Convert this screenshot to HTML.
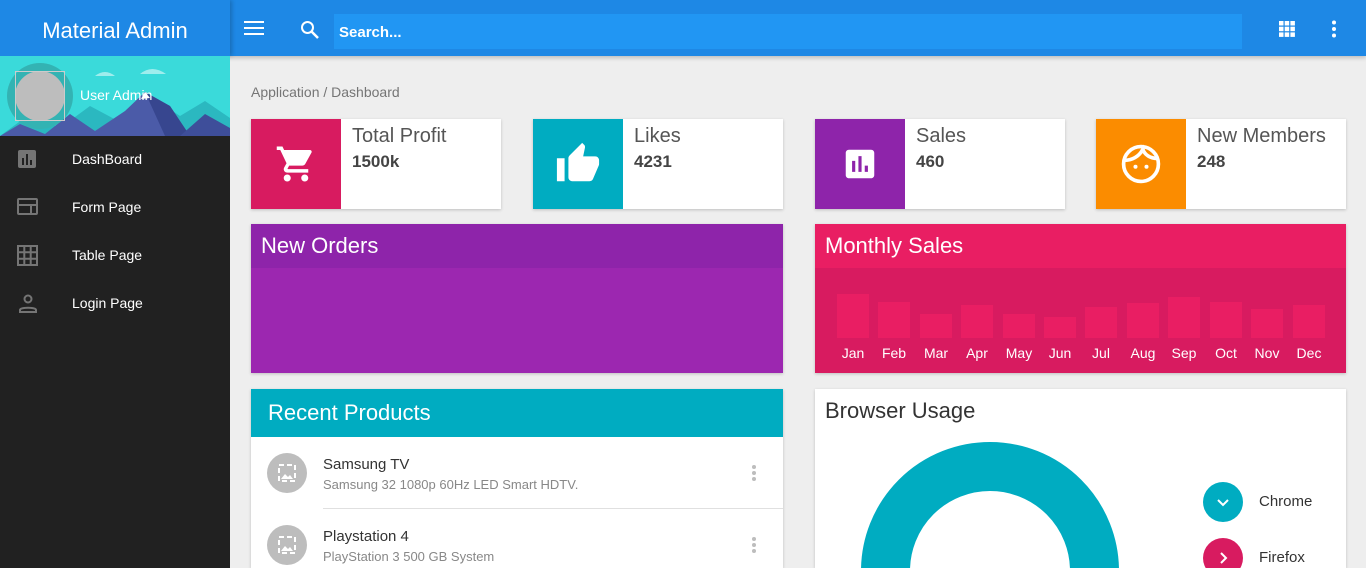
<!DOCTYPE html>
<html><head><meta charset="utf-8"><style>
*{box-sizing:border-box;margin:0;padding:0}
html,body{width:1366px;height:568px;overflow:hidden}
body{background:#EEEEEE;font-family:"Liberation Sans",sans-serif;position:relative}
.abs{position:absolute}
.card{position:absolute;background:#fff;box-shadow:0 1px 3px rgba(0,0,0,.2)}
.ic{position:absolute;left:0;top:0;width:90px;height:90px;display:flex;align-items:center;justify-content:center}
.ttl{position:absolute;left:101px;top:6px;font-size:20px;color:#555;font-weight:300}
.val{position:absolute;left:101px;top:33px;font-size:17px;color:#444;font-weight:bold}
.menu{position:absolute;left:0;width:230px;height:48px;color:#fff;font-size:14px}
.menu span{position:absolute;left:72px;top:15px}
.menu svg{position:absolute;left:17px;top:13px}
.bar{position:absolute;background:#E91E63;width:32px;bottom:0}
.mon{position:absolute;top:121px;color:#fff;font-size:14px;width:40px;text-align:center}
</style></head><body>
<div class="abs" style="left:0;top:0;width:1366px;height:56px;background:#1E88E5;box-shadow:0 2px 4px rgba(0,0,0,.2)"></div>
<div class="abs" style="left:0;top:0;width:230px;height:56px;background:#1E88E5;color:#fff;font-size:22px;text-align:center;line-height:62px;box-shadow:2px 0 4px rgba(0,0,0,.2)">Material Admin</div>
<svg class="abs" style="left:244px;top:20px" width="20" height="16"><rect y="1" width="20" height="2" fill="#fff"/><rect y="7" width="20" height="2" fill="#fff"/><rect y="13" width="20" height="2" fill="#fff"/></svg>
<svg class="abs" style="left:300px;top:20px" width="20" height="20"><circle cx="7.5" cy="7.5" r="5.5" stroke="#fff" stroke-width="2" fill="none"/><line x1="11.5" y1="11.5" x2="18" y2="18" stroke="#fff" stroke-width="2.5"/></svg>
<div class="abs" style="left:334px;top:14px;width:908px;height:35px;background:#2196F3;color:#fff;font-size:15px;line-height:37px;padding-left:5px;font-weight:600">Search...</div>
<svg class="abs" style="left:1279px;top:21px" width="16" height="16" fill="#fff"><rect x="0" y="0" width="4.5" height="4.5"/><rect x="5.7" y="0" width="4.5" height="4.5"/><rect x="11.4" y="0" width="4.5" height="4.5"/><rect x="0" y="5.7" width="4.5" height="4.5"/><rect x="5.7" y="5.7" width="4.5" height="4.5"/><rect x="11.4" y="5.7" width="4.5" height="4.5"/><rect x="0" y="11.4" width="4.5" height="4.5"/><rect x="5.7" y="11.4" width="4.5" height="4.5"/><rect x="11.4" y="11.4" width="4.5" height="4.5"/></svg>
<svg class="abs" style="left:1330px;top:20px" width="8" height="18" fill="#fff"><circle cx="4" cy="2.5" r="2"/><circle cx="4" cy="9" r="2"/><circle cx="4" cy="15.5" r="2"/></svg>
<div class="abs" style="left:0;top:136px;width:230px;height:432px;background:#212121"></div>
<svg class="abs" style="left:0;top:56px" width="230" height="80">
<rect width="230" height="80" fill="#3ADADA"/>
<path d="M95 20 q10-8 20 0z M140 18 q12-10 26 0z" fill="#9EEDED"/>
<polygon points="0,80 30,58 60,72 90,50 120,66 150,40 180,60 205,45 230,62 230,80" fill="#2BB8C0"/>
<polygon points="0,80 20,68 45,78 70,58 95,75 125,55 145,36 170,50 190,80" fill="#4B5BA8"/>
<polygon points="145,36 165,80 190,80 170,50" fill="#37468F"/>
<polygon points="180,80 205,58 230,72 230,80" fill="#3E4E9A"/>
<polygon points="145,36 141,43 150,42" fill="#fff"/>
</svg>
<div class="abs" style="left:7px;top:63px;width:66px;height:66px;border-radius:50%;background:#33B3B3"></div>
<div class="abs" style="left:15px;top:71px;width:50px;height:50px;border-radius:50%;background:#BDBDBD"></div>
<div class="abs" style="left:15px;top:71px;width:50px;height:50px;border:1px solid #ccc"></div>
<div class="abs" style="left:80px;top:87px;color:#fff;font-size:14px">User Admin</div>
<div class="menu" style="top:136px"><svg width="20" height="20"><rect x="1" y="1" width="18" height="18" rx="2" fill="#757575"/><rect x="5" y="9" width="2" height="7" fill="#212121"/><rect x="9" y="5" width="2" height="11" fill="#212121"/><rect x="13" y="11" width="2" height="5" fill="#212121"/></svg><span>DashBoard</span></div>
<div class="menu" style="top:184px"><svg width="22" height="20"><rect x="1" y="2" width="19" height="15" rx="1" fill="none" stroke="#757575" stroke-width="2"/><line x1="1" y1="8" x2="20" y2="8" stroke="#757575" stroke-width="2"/><line x1="14" y1="8" x2="14" y2="17" stroke="#757575" stroke-width="2"/></svg><span>Form Page</span></div>
<div class="menu" style="top:232px"><svg width="22" height="22" fill="none" stroke="#757575" stroke-width="2"><rect x="1" y="1" width="19" height="19"/><line x1="7.3" y1="1" x2="7.3" y2="20"/><line x1="13.7" y1="1" x2="13.7" y2="20"/><line x1="1" y1="7.3" x2="20" y2="7.3"/><line x1="1" y1="13.7" x2="20" y2="13.7"/></svg><span>Table Page</span></div>
<div class="menu" style="top:280px"><svg width="22" height="22" fill="none" stroke="#757575" stroke-width="2"><circle cx="11" cy="6" r="3.5"/><path d="M3 19 v-2 c0-3 16-3 16 0 v2z"/></svg><span>Login Page</span></div>
<div class="abs" style="left:251px;top:84px;color:#757575;font-size:14px">Application / Dashboard</div>
<div class="card" style="left:251px;top:119px;width:250px;height:90px"><div class="ic" style="background:#D81B60"><svg width="42" height="42" viewBox="0 0 24 24" fill="#fff"><path d="M7 18c-1.1 0-2 .9-2 2s.9 2 2 2 2-.9 2-2-.9-2-2-2zM1 2v2h2l3.6 7.6-1.350 2.4c-.16.28-.25.61-.25.96 0 1.1.9 2 2 2h12v-2H7.42c-.14 0-.25-.11-.25-.25l.03-.12.9-1.63h7.45c.75 0 1.41-.41 1.75-1.030l3.58-6.49A1 1 0 0020 4H5.21l-.94-2H1zm16 16c-1.1 0-2 .9-2 2s.9 2 2 2 2-.9 2-2-.9-2-2-2z"/></svg></div><div class="ttl">Total Profit</div><div class="val">1500k</div></div>
<div class="card" style="left:533px;top:119px;width:250px;height:90px"><div class="ic" style="background:#00ACC1"><svg width="46" height="46" viewBox="0 0 24 24" fill="#fff"><path d="M1 21h4V9H1v12zm22-11c0-1.1-.9-2-2-2h-6.31l.95-4.57.03-.32c0-.41-.17-.79-.44-1.06L14.17 1 7.59 7.59C7.22 7.95 7 8.45 7 9v10c0 1.1.9 2 2 2h9c.83 0 1.54-.5 1.840-1.22l3.02-7.05c.09-.23.14-.47.14-.73v-2z"/></svg></div><div class="ttl">Likes</div><div class="val">4231</div></div>
<div class="card" style="left:815px;top:119px;width:250px;height:90px"><div class="ic" style="background:#8E24AA"><svg width="38" height="38" viewBox="0 0 24 24" fill="#fff"><path d="M19 3H5c-1.1 0-2 .9-2 2v14c0 1.1.9 2 2 2h14c1.1 0 2-.9 2-2V5c0-1.1-.9-2-2-2zM9 17H7v-7h2v7zm4 0h-2V7h2v10zm4 0h-2v-4h2v4z"/></svg></div><div class="ttl">Sales</div><div class="val">460</div></div>
<div class="card" style="left:1096px;top:119px;width:250px;height:90px"><div class="ic" style="background:#FB8C00"><svg width="44" height="44" viewBox="0 0 24 24" fill="none" stroke="#fff" stroke-width="2"><circle cx="12" cy="12" r="9.5"/><path d="M3 10c4 0 8-2 10-6c1 3 4 5 8 5" /><circle cx="9" cy="13.5" r="1.1" fill="#fff" stroke="none"/><circle cx="15" cy="13.5" r="1.1" fill="#fff" stroke="none"/></svg></div><div class="ttl">New Members</div><div class="val">248</div></div>
<div class="card" style="left:251px;top:224px;width:532px;height:149px;background:#9C27B0"><div class="abs" style="left:0;top:0;width:532px;height:44px;background:#8E24AA;color:#fff;font-size:22px;font-weight:300;padding:9px 0 0 10px">New Orders</div></div>
<div class="card" style="left:815px;top:224px;width:531px;height:149px;background:#D81B60">
<div class="abs" style="left:0;top:0;width:531px;height:44px;background:#E91E63;color:#fff;font-size:22px;font-weight:300;padding:9px 0 0 10px">Monthly Sales</div>
<div class="abs" style="left:0;top:70px;width:531px;height:44px">
<div class="bar" style="left:22px;height:44px"></div><div class="bar" style="left:63px;height:36px"></div><div class="bar" style="left:105px;height:24px"></div><div class="bar" style="left:146px;height:33px"></div><div class="bar" style="left:188px;height:24px"></div><div class="bar" style="left:229px;height:21px"></div><div class="bar" style="left:270px;height:31px"></div><div class="bar" style="left:312px;height:35px"></div><div class="bar" style="left:353px;height:41px"></div><div class="bar" style="left:395px;height:36px"></div><div class="bar" style="left:436px;height:29px"></div><div class="bar" style="left:478px;height:33px"></div>
</div>
<div class="mon" style="left:18px">Jan</div><div class="mon" style="left:59px">Feb</div><div class="mon" style="left:101px">Mar</div><div class="mon" style="left:142px">Apr</div><div class="mon" style="left:184px">May</div><div class="mon" style="left:225px">Jun</div><div class="mon" style="left:266px">Jul</div><div class="mon" style="left:308px">Aug</div><div class="mon" style="left:349px">Sep</div><div class="mon" style="left:391px">Oct</div><div class="mon" style="left:432px">Nov</div><div class="mon" style="left:474px">Dec</div>
</div>
<div class="card" style="left:251px;top:389px;width:532px;height:179px;overflow:hidden">
<div class="abs" style="left:0;top:0;width:532px;height:48px;background:#00ACC1;color:#fff;font-size:22px;font-weight:300;padding:11px 0 0 17px">Recent Products</div>
<div class="abs" style="left:16px;top:64px;width:40px;height:40px;border-radius:50%;background:#BDBDBD"><svg width="40" height="40" viewBox="0 0 40 40" fill="none" stroke="#fff" stroke-width="2"><rect x="12" y="12" width="16" height="16" stroke-dasharray="5 3"/><path d="M14 26l4-5 3 3 2-2 3 4z" fill="#fff" stroke="none"/></svg></div>
<div class="abs" style="left:72px;top:67px;font-size:15px;color:#333">Samsung TV</div>
<div class="abs" style="left:72px;top:88px;font-size:13px;color:#888">Samsung 32 1080p 60Hz LED Smart HDTV.</div>
<svg class="abs" style="left:500px;top:75px" width="6" height="18" fill="#BDBDBD"><circle cx="3" cy="3" r="2"/><circle cx="3" cy="9" r="2"/><circle cx="3" cy="15" r="2"/></svg>
<div class="abs" style="left:72px;top:119px;width:460px;height:1px;background:#e0e0e0"></div>
<div class="abs" style="left:16px;top:136px;width:40px;height:40px;border-radius:50%;background:#BDBDBD"><svg width="40" height="40" viewBox="0 0 40 40" fill="none" stroke="#fff" stroke-width="2"><rect x="12" y="12" width="16" height="16" stroke-dasharray="5 3"/><path d="M14 26l4-5 3 3 2-2 3 4z" fill="#fff" stroke="none"/></svg></div>
<div class="abs" style="left:72px;top:139px;font-size:15px;color:#333">Playstation 4</div>
<div class="abs" style="left:72px;top:160px;font-size:13px;color:#888">PlayStation 3 500 GB System</div>
<svg class="abs" style="left:500px;top:147px" width="6" height="18" fill="#BDBDBD"><circle cx="3" cy="3" r="2"/><circle cx="3" cy="9" r="2"/><circle cx="3" cy="15" r="2"/></svg>
</div>
<div class="card" style="left:815px;top:389px;width:531px;height:179px;overflow:hidden">
<div class="abs" style="left:10px;top:9px;font-size:22px;font-weight:300;color:#333">Browser Usage</div>
<svg class="abs" style="left:0;top:0" width="531" height="179"><circle cx="175" cy="182" r="104.5" fill="none" stroke="#00ACC1" stroke-width="49"/></svg>
<div class="abs" style="left:388px;top:93px;width:40px;height:40px;border-radius:50%;background:#00ACC1"><svg width="40" height="40"><path d="M15 18l5 5 5-5" stroke="#fff" stroke-width="2" fill="none"/></svg></div>
<div class="abs" style="left:444px;top:104px;font-size:15px;color:#333">Chrome</div>
<div class="abs" style="left:388px;top:149px;width:40px;height:40px;border-radius:50%;background:#D81B60"><svg width="40" height="40"><path d="M18 15l5 5-5 5" stroke="#fff" stroke-width="2" fill="none"/></svg></div>
<div class="abs" style="left:444px;top:160px;font-size:15px;color:#333">Firefox</div>
</div>
</body></html>
